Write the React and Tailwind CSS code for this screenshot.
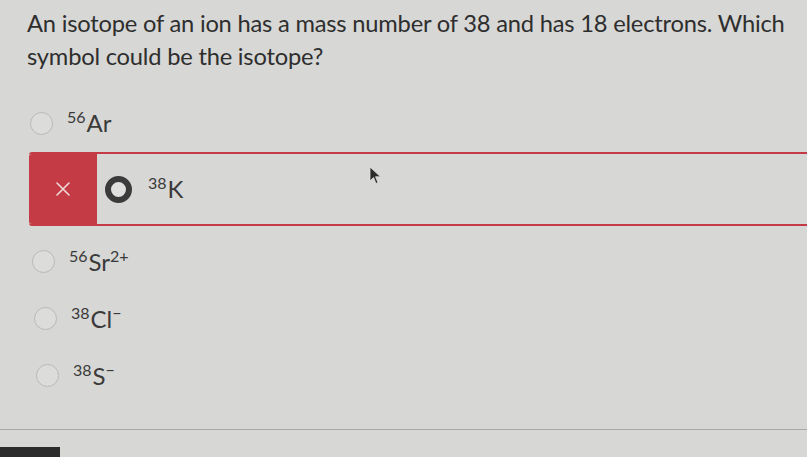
import React from "react";

function Radio({ className = "" }) {
  return (
    <span
      className={`block h-[23px] w-[23px] shrink-0 rounded-full border border-[#b9b9b7] bg-[#dcdcda] ${className}`}
    />
  );
}

function Formula({ mass, sym, charge }) {
  return (
    <span className="text-[24px] leading-none text-[#3a3a3a]">
      <sup className="relative -top-[9px] mr-[1px] text-[16px]">{mass}</sup>
      {sym}
      {charge && <sup className="relative -top-[9px] text-[16px]">{charge}</sup>}
    </span>
  );
}

function Option({ mass, sym, charge, shift }) {
  return (
    <div className={`flex h-[57px] items-center gap-[14px] ${shift}`}>
      <Radio />
      <Formula mass={mass} sym={sym} charge={charge} />
    </div>
  );
}

export default function App() {
  return (
    <div
      className="relative h-[457px] w-[807px] overflow-hidden bg-[#d7d7d5]"
      style={{ fontFamily: "Lato, 'Open Sans', sans-serif" }}
    >
      <div className="whitespace-nowrap px-[27px] pt-[7px] text-[23.7px] leading-[33px] tracking-[-0.2px] text-[#2e2e2e]">
        An isotope of an ion has a mass number of 38 and has 18 electrons. Which
        <br />
        symbol could be the isotope?
      </div>

      <div className="mt-[35px] pl-[30px]">
        <div className="flex h-[30px] items-center gap-[14px]">
          <Radio />
          <Formula mass="56" sym="Ar" />
        </div>
      </div>

      <div className="ml-[29px] mt-[14px] flex h-[74px] w-[800px] rounded-l-[3px] border-2 border-l-0 border-[#c43a45]">
        <div className="flex w-[68px] items-center justify-center rounded-l-[3px] bg-[#c43a45]">
          <svg width="16" height="16" viewBox="0 0 16 16">
            <path d="M2 2 L14 14 M14 2 L2 14" stroke="#f1d9da" strokeWidth="1.6" strokeLinecap="round" />
          </svg>
        </div>
        <div className="flex items-center gap-[16px] pl-[8px]">
          <span className="block h-[27px] w-[27px] rounded-full border-[6px] border-[#3b3b3b] bg-[#e0e0de]" />
          <Formula mass="38" sym="K" />
        </div>
      </div>

      <div className="mt-[7px]">
        <Option mass="56" sym="Sr" charge="2+" shift="pl-[32px]" />
        <Option mass="38" sym="Cl" charge="−" shift="pl-[34px]" />
        <Option mass="38" sym="S" charge="−" shift="pl-[36px]" />
      </div>

      <div className="mt-[25px] h-px bg-[#a9a9a7]" />
      <div className="absolute bottom-0 left-0 h-[10px] w-[60px] bg-[#2c2c2c]" />
      <svg className="absolute left-[369px] top-[166px]" width="14" height="20" viewBox="0 0 14 20">
        <path d="M1 1 L1 15 L4.5 11.5 L7 17.5 L9 16.5 L6.5 10.8 L11.5 10.8 Z" fill="#2b2b2b" stroke="#e0e0e0" strokeWidth="0.8" />
      </svg>
    </div>
  );
}
